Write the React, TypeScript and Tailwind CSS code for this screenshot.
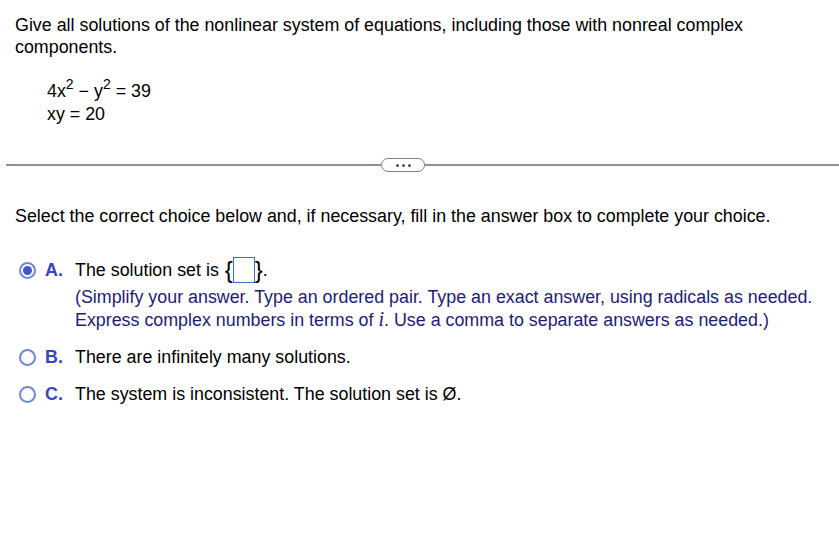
import React from "react";

function Radio({ checked }: { checked?: boolean }) {
  return (
    <div className="w-[17px] h-[17px] rounded-full border-2 border-[#6f86dd] flex items-center justify-center shrink-0 bg-white">
      {checked && <div className="w-[9px] h-[9px] rounded-full bg-[#3d56cf]" />}
    </div>
  );
}

function Choice({ letter, checked, children }: { letter: string; checked?: boolean; children: React.ReactNode }) {
  return (
    <div className="flex items-start">
      <div className="w-[75px] shrink-0 flex items-center h-[26px] pl-[19px]">
        <Radio checked={checked} />
        <span className="ml-[9px] font-bold text-[#3444c6]">{letter}</span>
      </div>
      <div className="flex-1">{children}</div>
    </div>
  );
}

export default function App() {
  return (
    <div className="w-[839px] h-[545px] bg-white text-[17.85px] text-black overflow-hidden" style={{ fontFamily: '"Liberation Sans", Arial, sans-serif' }}>
      <div className="pt-[14px] px-[15px] leading-[22px]">
        Give all solutions of the nonlinear system of equations, including those with nonreal complex components.
      </div>
      <div className="pl-[47px] mt-[22px] leading-[23px]">
        <div>
          4x<sup className="text-[14px] -top-[0.6em]">2</sup> − y<sup className="text-[14px] -top-[0.6em]">2</sup> = 39
        </div>
        <div>xy = 20</div>
      </div>

      <div className="flex items-center mt-[32px] pl-[6px]">
        <div className="w-[375px] h-[2px] bg-[#8c919b]" />
        <div className="w-[44px] h-[14px] rounded-full border border-[#7d838e] flex items-center justify-center gap-[3px]">
          <div className="w-[3px] h-[3px] rounded-full bg-[#4a4f58]" />
          <div className="w-[3px] h-[3px] rounded-full bg-[#4a4f58]" />
          <div className="w-[3px] h-[3px] rounded-full bg-[#4a4f58]" />
        </div>
        <div className="flex-1 h-[2px] bg-[#8c919b]" />
      </div>

      <div className="px-[15px] mt-[33px] leading-[22px]">
        Select the correct choice below and, if necessary, fill in the answer box to complete your choice.
      </div>

      <div className="mt-[30px] flex flex-col">
        <Choice letter="A." checked>
          <div className="flex items-center h-[26px]">
            <span>The solution set is</span>
            <span className="ml-[6px] text-[24px] leading-none font-light">{"{"}</span>
            <span className="w-[22px] h-[26px] border border-[#3b6fd0] inline-block" />
            <span className="text-[24px] leading-none font-light">{"}"}</span>
            <span>.</span>
          </div>
          <div className="text-[#1c1c7a] leading-[22px] mt-[3px]">
            (Simplify your answer. Type an ordered pair. Type an exact answer, using radicals as needed.
            <br />
            Express complex numbers in terms of{" "}
            <i style={{ fontFamily: '"Liberation Serif", serif' }} className="text-[20px]">i</i>. Use a comma to separate answers as needed.)
          </div>
        </Choice>
        <div className="mt-[13px]">
          <Choice letter="B.">
            <div className="h-[26px] flex items-center">There are infinitely many solutions.</div>
          </Choice>
        </div>
        <div className="mt-[11px]">
          <Choice letter="C.">
            <div className="h-[26px] flex items-center">The system is inconsistent. The solution set is Ø.</div>
          </Choice>
        </div>
      </div>
    </div>
  );
}
